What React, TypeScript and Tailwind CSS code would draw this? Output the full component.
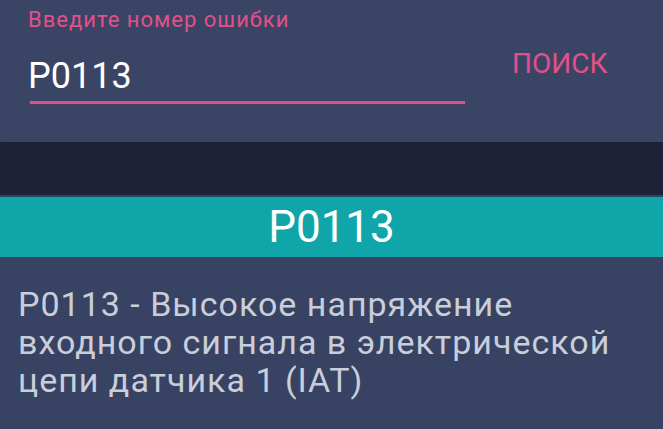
import React from "react";

const font = { fontFamily: "Roboto, 'Noto Sans', sans-serif" };

const App: React.FC = () => {
  return (
    <div className="w-[663px] h-[429px] bg-[#384262] overflow-hidden flex flex-col" style={font}>
      {/* Search panel */}
      <div className="h-[142px] bg-[#3a4464] flex rounded-bl-sm shadow-md">
        <div className="pl-[28px] pt-[9px] w-[465px] flex flex-col">
          <label className="text-[22px] leading-none tracking-[1px] text-[#e2508a] block">
            Введите номер ошибки
          </label>
          <input
            defaultValue="P0113"
            className="mt-[27px] bg-transparent outline-none text-[36px] leading-none h-[36px] text-white w-full"
          />
          <div className="mt-[7px] ml-[2px] h-[3px] bg-[#e2508a]" />
        </div>
        <button className="ml-[47px] mt-[50px] self-start text-[28px] leading-none text-[#e2508a]">
          ПОИСК
        </button>
      </div>

      {/* Spacer */}
      <div className="h-[53px] bg-[#1e2238]" />
      <div className="h-[2px] bg-[#234a5e]" />

      {/* Result */}
      <div className="h-[60px] bg-[#10a6a9] flex items-center justify-center">
        <span className="text-[44px] leading-none text-white">P0113</span>
      </div>
      <p className="pl-[18px] pt-[28px] w-[630px] text-[34px] leading-[38px] tracking-[1px] text-[#c9cedb]">
        P0113 - Высокое напряжение входного сигнала в электрической цепи датчика 1 (IAT)
      </p>
    </div>
  );
};

export default App;
